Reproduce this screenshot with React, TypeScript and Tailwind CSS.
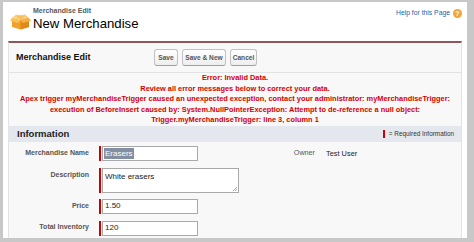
import React from 'react';

const font = { fontFamily: '"Liberation Sans", Arial, sans-serif' };

const BoxIcon: React.FC = () => (
  <svg width="21" height="18" viewBox="0 0 21 18">
    <path d="M2 6 L10.5 8 L19 6 L19 15 L10.5 17.5 L2 15 Z" fill="#f0a12c" />
    <path d="M10.5 8 L19 6 L19 15 L10.5 17.5 Z" fill="#e08a16" />
    <path d="M2 6 L10.5 8 L8.5 11 L0 8.8 Z" fill="#f9c15c" />
    <path d="M19 6 L10.5 8 L12.5 11 L21 8.8 Z" fill="#f6b043" />
    <path d="M2 6 L6 2.5 L14.5 4 L10.5 8 Z" fill="#fbd27a" />
    <path d="M19 6 L15 2.5 L6.5 4 L10.5 8 Z" fill="#f7bb55" opacity="0.8" />
  </svg>
);

const HelpIcon: React.FC = () => (
  <span className="w-[9px] h-[9px] rounded-full bg-[#f2a33a] text-white text-[7px] font-bold leading-[9px] text-center inline-block">
    ?
  </span>
);

const Btn: React.FC<{ w: string; children: React.ReactNode }> = ({ w, children }) => (
  <div
    className={`${w} h-[17px] rounded-[3px] border border-[#c2c2c2] border-b-[#a0a0a0] bg-gradient-to-b from-white to-[#eeeeee] text-[6.6px] font-bold text-[#555] flex items-center justify-center`}
  >
    {children}
  </div>
);

const Req: React.FC<{ h: string }> = ({ h }) => <div className={`w-[2px] ${h} bg-[#cc0000] mr-[1px]`} />;

const label = 'w-[80px] text-right text-[7px] font-bold text-[#555555]';

const App: React.FC = () => {
  return (
    <div style={font} className="w-[474px] h-[242px] bg-[#c8c8c8] pl-[3px] pt-[2px] pr-[7px] pb-[4px] overflow-hidden">
      <div className="bg-white h-full px-[5px] flex flex-col">
        {/* Page header */}
        <div className="h-[39px] flex items-start shrink-0">
          <div className="mt-[10px] ml-[2px]">
            <BoxIcon />
          </div>
          <div className="ml-[2px] mt-[4px]">
            <div className="text-[7px] font-bold text-[#5a5a5a] leading-[9px]">Merchandise Edit</div>
            <div className="text-[13.2px] text-black leading-[16px] mt-[1px]">New Merchandise</div>
          </div>
          <div className="ml-auto mt-[6px] flex items-center gap-[3px]">
            <span className="text-[6.8px] text-[#1b5fa8]">Help for this Page</span>
            <HelpIcon />
          </div>
        </div>

        {/* Page block */}
        <div className="flex-1 border-t-2 border-t-[#8e5656] border-x border-x-[#e3e3e3] bg-[#f8f8f8] flex flex-col">
          <div className="h-[30px] flex items-center border-b border-[#e0e3e5] shrink-0">
            <div className="w-[145px] pl-[7px] text-[9px] font-bold text-[#111]">Merchandise Edit</div>
            <div className="flex gap-[4px]">
              <Btn w="w-[24px]">Save</Btn>
              <Btn w="w-[44px]">Save &amp; New</Btn>
              <Btn w="w-[27px]">Cancel</Btn>
            </div>
          </div>

          <div className="text-center text-[#d40000] font-bold text-[7.4px] leading-[10.6px] shrink-0">
            <div>Error: Invalid Data.</div>
            <div>Review all error messages below to correct your data.</div>
            <div>
              Apex trigger myMerchandiseTrigger caused an unexpected exception, contact your administrator:
              myMerchandiseTrigger:
            </div>
            <div>execution of BeforeInsert caused by: System.NullPointerException: Attempt to de-reference a null object:</div>
            <div>Trigger.myMerchandiseTrigger: line 3, column 1</div>
          </div>

          <div className="h-[16px] bg-[#e4e8ee] flex items-center shrink-0">
            <div className="pl-[8px] text-[9.5px] font-bold text-[#222]">Information</div>
            <div className="ml-auto mr-[7px] flex items-center">
              <div className="w-[2px] h-[8px] bg-[#cc0000] mr-[4px]" />
              <span className="text-[6.4px] text-[#333]">= Required Information</span>
            </div>
          </div>

          <div className="flex flex-col pt-[4px] gap-[6px]">
            <div className="flex items-center h-[15px]">
              <div className={label}>Merchandise Name</div>
              <div className="ml-[10px] w-[150px] flex items-center">
                <Req h="h-[15px]" />
                <div className="w-[96px] h-[15px] border border-[#a9a9a9] bg-white flex items-center pl-[1px]">
                  <span className="bg-[#838fa3] text-white text-[8px] leading-[11px] px-[1px]">Erasers</span>
                </div>
              </div>
              <div className="w-[66px] text-right text-[7.2px] text-[#555]">Owner</div>
              <div className="ml-[11px] text-[7.4px] text-[#222]">Test User</div>
            </div>

            <div className="flex items-start h-[25px] mt-[1px]">
              <div className={`${label} mt-[2px]`}>Description</div>
              <div className="ml-[10px] flex items-start">
                <Req h="h-[25px]" />
                <div className="relative w-[137px] h-[25px] border border-[#a9a9a9] bg-white pl-[2px] pt-[2px] text-[8px] text-[#222]">
                  White erasers
                  <svg className="absolute right-[1px] bottom-[1px]" width="5" height="5" viewBox="0 0 5 5">
                    <path d="M1 5 L5 1 M3 5 L5 3" stroke="#999" strokeWidth="0.8" />
                  </svg>
                </div>
              </div>
            </div>

            <div className="flex items-center h-[15px]">
              <div className={label}>Price</div>
              <div className="ml-[10px] flex items-center">
                <Req h="h-[15px]" />
                <div className="w-[96px] h-[15px] border border-[#a9a9a9] bg-white flex items-center pl-[2px] text-[8px] text-[#222]">
                  1.50
                </div>
              </div>
            </div>

            <div className="flex items-center h-[15px] mt-[1px]">
              <div className={`${label} -mt-[3px]`}>Total Inventory</div>
              <div className="ml-[10px] flex items-center">
                <Req h="h-[15px]" />
                <div className="w-[96px] h-[15px] border border-[#a9a9a9] bg-white flex items-center pl-[2px] text-[8px] text-[#222]">
                  120
                </div>
              </div>
            </div>
          </div>
        </div>
      </div>
    </div>
  );
};

export default App;
